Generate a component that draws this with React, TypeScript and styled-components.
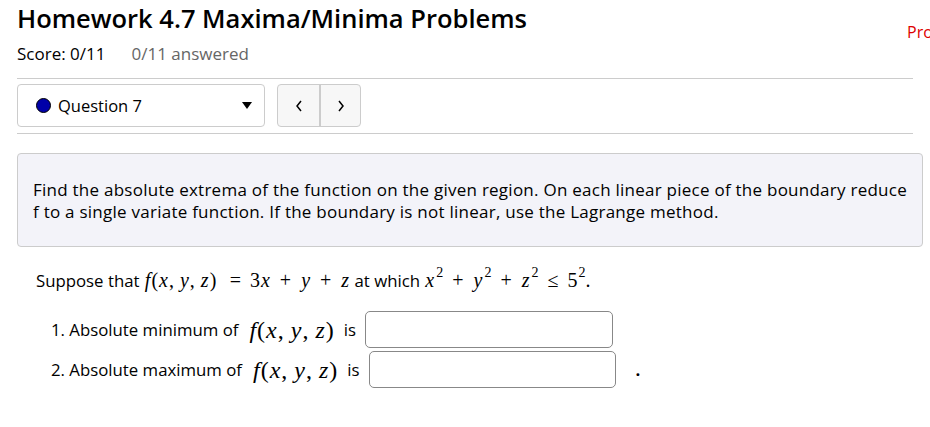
import styled, { createGlobalStyle } from 'styled-components';

const GlobalStyle = createGlobalStyle`
  html, body {
    margin: 0;
    padding: 0;
    background: #fff;
    overflow: hidden;
  }
  body {
    font-family: "Open Sans", "Noto Sans", sans-serif;
    color: #000;
  }
`;

const Page = styled.div`
  width: 905px;
  padding: 3px 0 0 17px;
`;

const Header = styled.header`
  display: flex;
  align-items: flex-start;
`;

const Title = styled.h1`
  margin: 0;
  font-size: 25.5px;
  line-height: 30px;
  font-weight: 600;
`;

const PrintSlot = styled.div`
  margin-left: auto;
  width: 15px;
  height: 30px;
  box-sizing: border-box;
  white-space: nowrap;
  padding-top: 21px;
  line-height: 16px;
`;

const PrintLink = styled.a`
  color: #d00;
  font-size: 16px;
  text-decoration: none;
`;

const ScoreLine = styled.div`
  display: flex;
  gap: 26px;
  margin-top: 11px;
  font-size: 17px;
  line-height: 20px;
`;

const Muted = styled.span`
  color: #666;
`;

const Rule = styled.hr<{ $top: number }>`
  margin: ${({ $top }) => $top}px 9px 0 0;
  border: 0;
  border-top: 1px solid #ccc;
`;

const Toolbar = styled.div`
  display: flex;
  gap: 12px;
  margin-top: 5px;
`;

const Select = styled.div`
  box-sizing: border-box;
  width: 248px;
  height: 43px;
  border: 1px solid #ccc;
  border-radius: 4px;
  display: flex;
  align-items: center;
  padding: 0 12px 0 18px;
  font-size: 16.5px;
`;

const Dot = styled.span`
  width: 13px;
  height: 13px;
  border-radius: 50%;
  background: #0000a8;
  border: 1px solid #000;
  margin-right: 7px;
`;

const Caret = styled.span`
  margin-left: auto;
  width: 0;
  height: 0;
  border-left: 5px solid transparent;
  border-right: 5px solid transparent;
  border-top: 7px solid #000;
`;

const NavGroup = styled.div`
  display: flex;
  height: 43px;
  border: 1px solid #ccc;
  border-radius: 4px;
  background: #f7f7f7;
  box-sizing: border-box;
`;

const NavButton = styled.button<{ $divider?: boolean }>`
  width: 41px;
  height: 100%;
  border: 0;
  background: transparent;
  display: flex;
  align-items: center;
  justify-content: center;
  padding: 0;
  border-left: ${({ $divider }) => ($divider ? '2px solid #ccc' : '0')};
`;

const InfoBox = styled.div`
  margin-top: 19px;
  box-sizing: border-box;
  width: 906px;
  background: #f3f3f9;
  border: 1px solid #ccc;
  border-radius: 4px;
  padding: 25px 10px 23px 15px;
  font-size: 17px;
  letter-spacing: 0.25px;
  line-height: 22px;
`;

const Question = styled.div`
  padding: 21px 0 0 19px;
  font-size: 16.8px;
`;

const Statement = styled.p`
  margin: 0;
  line-height: 26px;
`;

const Items = styled.ol`
  margin: 17px 0 0;
  padding: 0 0 0 15px;
  list-style: none;
  display: flex;
  flex-direction: column;
  gap: 3px;
  font-size: 16.8px;
`;

const Item = styled.li`
  display: flex;
  align-items: center;
  gap: 10px;
`;

const Answer = styled.input<{ $width: number }>`
  box-sizing: border-box;
  width: ${({ $width }) => $width}px;
  height: 37px;
  border: 1px solid #888;
  border-radius: 5px;
  background: #fff;
  margin-left: -1px;
`;

const Period = styled.span`
  margin-left: 10px;
  font-weight: 700;
`;

const M = styled.span<{ $size?: number }>`
  font-family: "Liberation Serif", "DejaVu Serif", serif;
  font-size: ${({ $size }) => $size ?? 20}px;
  line-height: 1;
  white-space: nowrap;
`;

const V = styled.i`
  font-style: italic;
  padding: 0 1px;
`;

const Op = styled.span`
  padding: 0 9px;
`;

const Sup = styled.sup`
  font-size: 14px;
  vertical-align: 10px;
  line-height: 0;
  margin-left: 1px;
`;

const Fxyz = ({ size }: { size?: number }) => (
  <M $size={size}>
    <V>f</V>(<V>x</V>, <V>y</V>, <V>z</V>)
  </M>
);

const Chevron = ({ dir }: { dir: 'left' | 'right' }) => (
  <svg width="8" height="12" viewBox="0 0 8 12">
    <path
      d={dir === 'left' ? 'M6 1 L2 6 L6 11' : 'M2 1 L6 6 L2 11'}
      fill="none"
      stroke="#000"
      strokeWidth="1.5"
    />
  </svg>
);

export default function App() {
  return (
    <>
      <GlobalStyle />
      <Page>
        <Header>
          <Title>Homework 4.7 Maxima/Minima Problems</Title>
          <PrintSlot>
            <PrintLink href="#">Progress</PrintLink>
          </PrintSlot>
        </Header>
        <ScoreLine>
          <span>Score: 0/11</span>
          <Muted>0/11 answered</Muted>
        </ScoreLine>
        <Rule $top={14} />
        <Toolbar>
          <Select>
            <Dot />
            Question 7
            <Caret />
          </Select>
          <NavGroup>
            <NavButton aria-label="Previous">
              <Chevron dir="left" />
            </NavButton>
            <NavButton $divider aria-label="Next">
              <Chevron dir="right" />
            </NavButton>
          </NavGroup>
        </Toolbar>
        <Rule $top={6} />
        <InfoBox>
          Find the absolute extrema of the function on the given region. On each linear piece of the
          boundary reduce f to a single variate function. If the boundary is not linear, use the
          Lagrange method.
        </InfoBox>
        <Question>
          <Statement>
            Suppose that <Fxyz />{' '}
            <M>
              <Op>=</Op>3<V>x</V>
              <Op>+</Op>
              <V>y</V>
              <Op>+</Op>
              <V>z</V>
            </M>{' '}
            at which{' '}
            <M>
              <V>x</V>
              <Sup>2</Sup>
              <Op>+</Op>
              <V>y</V>
              <Sup>2</Sup>
              <Op>+</Op>
              <V>z</V>
              <Sup>2</Sup>
              <Op>≤</Op>5<Sup>2</Sup>.
            </M>
          </Statement>
          <Items>
            <Item>
              <span>1. Absolute minimum of</span> <Fxyz size={24} /> <span>is</span>
              <Answer $width={248} />
            </Item>
            <Item>
              <span>2. Absolute maximum of</span> <Fxyz size={24} /> <span>is</span>
              <Answer $width={247} />
              <Period>.</Period>
            </Item>
          </Items>
        </Question>
      </Page>
    </>
  );
}
